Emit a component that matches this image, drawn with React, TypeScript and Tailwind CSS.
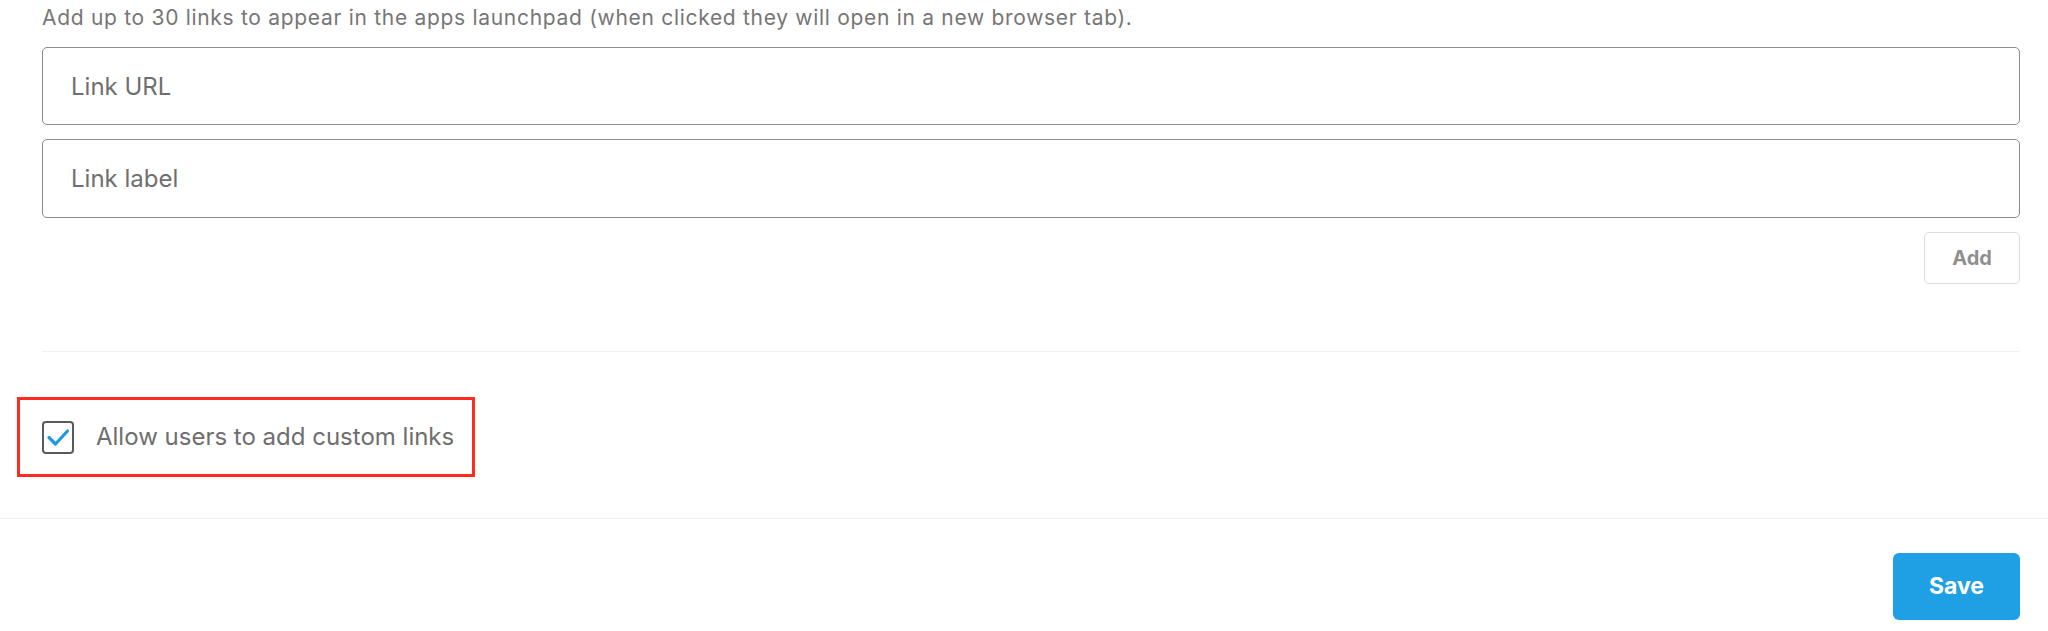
import React from 'react';

export default function App() {
  return (
    <div className="w-[2048px] h-[631px] bg-white font-['Inter','Liberation_Sans',sans-serif] overflow-hidden">
      <div className="pl-[42px] pr-[28px]">
        <p className="mt-[2px] text-[21px] leading-[32px] tracking-[0.7px] text-[#767676]">
          Add up to 30 links to appear in the apps launchpad (when clicked they will open in a new browser tab).
        </p>

        <div className="mt-[13px] flex flex-col gap-[14px]">
          <input
            placeholder="Link URL"
            className="h-[78px] w-full rounded-[5px] border-[1.5px] border-[#8c8c8c] px-[28px] text-[24px] text-[#333] placeholder:text-[#6f6f6f] outline-none"
          />
          <input
            placeholder="Link label"
            className="h-[79px] w-full rounded-[5px] border-[1.5px] border-[#8c8c8c] px-[28px] text-[24px] text-[#333] placeholder:text-[#6f6f6f] outline-none"
          />
        </div>

        <div className="mt-[14px] flex justify-end">
          <button className="h-[52px] w-[96px] rounded-[5px] border border-[#dcdcdc] text-[20px] font-bold text-[#8f8f8f]">
            Add
          </button>
        </div>

        <div className="mt-[67px] h-px bg-[#f0f0f0]" />

        <div className="-ml-[25px] mt-[45px] flex h-[80px] w-[458px] items-center border-[3px] border-[#ff2b1c] pl-[22px]">
          <span className="flex h-[33px] w-[32px] items-center justify-center rounded-[4px] border-2 border-[#5a5a5a]">
            <svg width="24" height="24" viewBox="0 0 24 24" fill="none">
              <path d="M3 12.5l6.5 6.5L21.5 6" stroke="#1e9be0" strokeWidth="3.2" strokeLinecap="round" strokeLinejoin="round" />
            </svg>
          </span>
          <span className="ml-[22px] text-[24px] text-[#6e6e6e]">Allow users to add custom links</span>
        </div>
      </div>

      <div className="mt-[41px] h-px bg-[#f2f2f2]" />

      <div className="mt-[34px] flex justify-end pr-[28px]">
        <button className="h-[67px] w-[127px] rounded-[6px] bg-[#1f9fe4] text-[23px] font-bold text-white">
          Save
        </button>
      </div>
    </div>
  );
}
